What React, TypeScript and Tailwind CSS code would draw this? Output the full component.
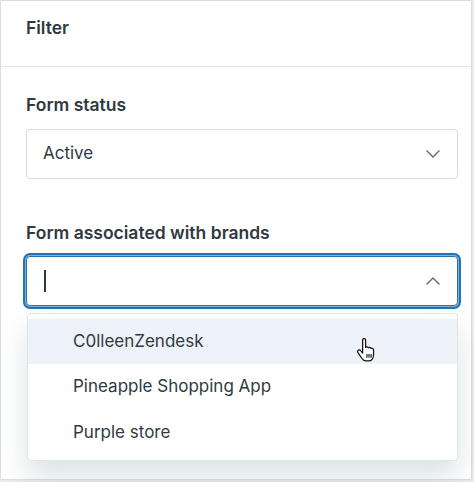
import React from "react";

const Chevron = ({ up = false }: { up?: boolean }) => (
  <svg width="16" height="16" viewBox="0 0 16 16" fill="none" className="shrink-0">
    <path
      d={up ? "M2 11 L8 5 L14 11" : "M2 5 L8 11 L14 5"}
      stroke="#5c6670"
      strokeWidth="1.4"
      strokeLinecap="round"
      strokeLinejoin="round"
    />
  </svg>
);

const Hand = () => (
  <svg width="23" height="25" viewBox="0 0 20 22" className="absolute left-[327px] top-[19px]">
    <path
      d="M6.6 1.8 C6.6 1 7.2 0.5 7.9 0.5 C8.7 0.5 9.2 1 9.2 1.8 V8.2 C9.8 7.6 11.2 7.7 11.6 8.6 C12.2 8.1 13.6 8.2 14 9.2 C14.8 8.8 16.2 9.2 16.2 10.6 V14.6 C16.2 17.6 14.6 20.2 12 20.2 H9.6 C7.8 20.2 6.8 19.2 5.9 17.8 L2.5 12.8 C1.9 11.9 2.2 10.9 3 10.6 C3.8 10.3 4.6 10.7 5.2 11.5 L6.6 13.2 Z"
      fill="#fff"
      stroke="#111"
      strokeWidth="1.1"
      strokeLinejoin="round"
    />
    <path d="M10.4 14 V17.4 M12.2 14 V17.4 M14 14 V17.4" stroke="#111" strokeWidth="1" />
  </svg>
);

export default function App() {
  return (
    <div
      className="w-[474px] h-[482px] bg-[#e9ebec] overflow-hidden"
      style={{ fontFamily: "Inter, 'Noto Sans', sans-serif" }}
    >
      <div className="w-[472px] h-[480px] bg-white border border-[#dcdfe1] text-[#2f3941] relative">
        <div className="h-[66px] border-b border-[#e4e6e8] pl-[25px] flex items-center pb-[10px]">
          <span className="text-[17.5px] font-semibold">Filter</span>
        </div>
        <div className="pl-[25px] pr-[13px] pt-[28px]">
          <div className="h-[20px] leading-[20px] text-[17.5px] font-semibold">Form status</div>
          <div className="mt-[14px] h-[50px] rounded-[4px] border border-[#d8dcde] flex items-center justify-between pl-[16px] pr-[16px]">
            <span className="text-[17px]">Active</span>
            <Chevron />
          </div>
          <div className="mt-[44px] h-[20px] leading-[20px] text-[17.5px] font-semibold">
            Form associated with brands
          </div>
          <div className="relative mt-[13px]">
            <div className="h-[50px] rounded-[4px] border border-[#1f73b7] shadow-[0_0_0_1px_#86b1d6,0_0_0_3px_#1f73b7] flex items-center justify-between pl-[17px] pr-[16px]">
              <span className="w-[1.5px] h-[22px] bg-[#2f3941]" />
              <Chevron up />
            </div>
            <div className="absolute left-[1px] right-0 top-[57px] rounded-[4px] border border-[#e3e6e8] bg-white py-[5px] shadow-[0_16px_28px_rgba(4,68,77,0.15)]">
              <div className="relative h-[45px] bg-[#edf2f9] flex items-center pl-[45px] text-[17px]">
                C0lleenZendesk
                <Hand />
              </div>
              <div className="h-[46px] flex items-center pl-[45px] text-[17px]">Pineapple Shopping App</div>
              <div className="h-[45px] flex items-center pl-[45px] text-[17px]">Purple store</div>
            </div>
          </div>
        </div>
      </div>
    </div>
  );
}
